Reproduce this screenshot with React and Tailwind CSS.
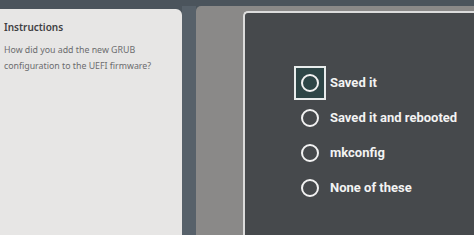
import React from 'react';

const options = [
  { label: 'Saved it', selected: true },
  { label: 'Saved it and rebooted' },
  { label: 'mkconfig' },
  { label: 'None of these' },
];

const App = () => {
  return (
    <div className="w-[474px] h-[235px] overflow-hidden bg-[#4b545c] flex pt-[6px]" style={{ fontFamily: '"Noto Sans", sans-serif' }}>
      {/* instructions panel */}
      <div className="w-[182px] mt-[3px] bg-[#e7e6e5] rounded-tr-[6px] px-[4px] pt-[12px]">
        <h2 className="text-[10px] font-semibold text-[#3f4042] leading-[13px]">Instructions</h2>
        <p className="mt-[8px] text-[8.8px] leading-[16px] text-[#6b6c6e]">
          How did you add the new GRUB configuration to the UEFI firmware?
        </p>
      </div>

      <div className="w-[14px] bg-[#57616a]" />

      {/* question panel */}
      <div className="flex-1 bg-[#8a8988] rounded-tl-[5px] pl-[47px] pt-[5px] flex">
        <div className="flex-1 bg-[#46494c] border-t-2 border-l-2 border-[#dcdcdc] rounded-tl-[5px] pl-[49px] pt-[52px] flex flex-col" style={{ fontFamily: 'Roboto, sans-serif' }}>
          {options.map((o, i) => (
            <div key={i} className="flex items-center h-[35px]">
              <div className={`w-[32px] h-[34px] flex items-center justify-center ${o.selected ? 'border-2 border-[#e8ecec] bg-[#2e4647]' : ''}`}>
                <div className="w-[18px] h-[18px] rounded-full border-2 border-[#f2f2f2]" />
              </div>
              <span className="ml-[4px] text-[13px] font-bold text-[#f3f3f3]">{o.label}</span>
            </div>
          ))}
        </div>
      </div>
    </div>
  );
};

export default App;
